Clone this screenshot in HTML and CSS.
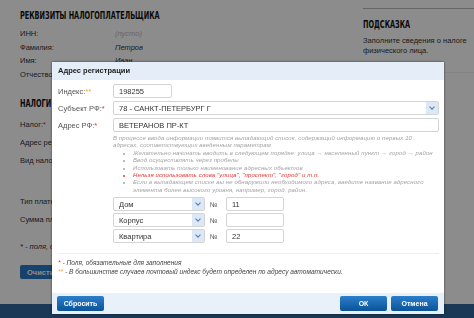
FILE: index.html
```html
<!DOCTYPE html>
<html lang="ru">
<head>
  <meta charset="UTF-8">
  <meta name="viewport" content="width=device-width, initial-scale=1.0">
  <title>Реквизиты налогоплательщика</title>
  <link rel="stylesheet" href="styles.css">
</head>
<body>
  <div class="page">
    <div class="main">
      <h2 class="titulo"><span>РЕКВИЗИТЫ НАЛОГОПЛАТЕЛЬЩИКА</span></h2>
      <div class="datos">
        <span>ИНН:</span><span class="vacio">(пусто)</span>
        <span>Фамилия:</span><span class="valor">Петров</span>
        <span>Имя:</span><span class="valor">Иван</span>
        <span>Отчество:</span><span class="valor">Иванович</span>
      </div>

      <h2 class="titulo titulo-nalogi"><span>НАЛОГИ</span></h2>
      <div class="campos">
        <div class="campo">Налог:<b class="req">*</b></div>
        <div class="campo">Адрес регистрации:</div>
        <div class="campo campo-alto">Вид налога:</div>
        <div class="campo">Тип платежа:</div>
        <div class="campo">Сумма платежа:</div>
      </div>
      <p class="nota">* - поля, обязательные для заполнения</p>
      <button class="btn-limpiar">Очистить</button>
    </div>

    <aside class="side">
      <h3 class="titulo"><span>ПОДСКАЗКА</span></h3>
      <p>Заполните сведения о налоге физического лица.</p>
    </aside>
  </div>
  <footer class="pie"></footer>

  <div class="overlay"></div>

  <div class="modal">
    <div class="modal-head">Адрес регистрации</div>
    <div class="modal-body">
      <div class="fila">
        <label>Индекс:<span class="opc">**</span></label>
        <input class="inp inp-index" type="text" value="198255">
      </div>
      <div class="fila">
        <label>Субъект РФ:<span class="req">*</span></label>
        <div class="sel sel-wide"><span>78 - САНКТ-ПЕТЕРБУРГ Г</span><i class="chev"></i></div>
      </div>
      <div class="fila">
        <label>Адрес РФ:<span class="req">*</span></label>
        <input class="inp inp-wide" type="text" value="ВЕТЕРАНОВ ПР-КТ">
      </div>

      <div class="ayuda">
        <p>В процессе ввода информации появится выпадающий список, содержащий информацию о первых 10<br>адресах, соответствующих введенным параметрам</p>
        <ul>
          <li>Желательно начинать вводить в следующем порядке: улица → населенный пункт → город → район</li>
          <li>Ввод осуществлять через пробелы</li>
          <li>Использовать только наименование адресных объектов</li>
          <li class="warn">Нельзя использовать слова "улица", "проспект", "город" и т.п.</li>
          <li>Если в выпадающем списке вы не обнаружили необходимого адреса, введите название адресного<br>элемента более высокого уровня, например, город, район.</li>
        </ul>
      </div>

      <div class="casa">
        <div class="casa-fila">
          <div class="sel sel-small"><span>Дом</span><i class="chev"></i></div>
          <span class="num">№</span>
          <input class="inp inp-num" type="text" value="11">
        </div>
        <div class="casa-fila">
          <div class="sel sel-small"><span>Корпус</span><i class="chev"></i></div>
          <span class="num">№</span>
          <input class="inp inp-num" type="text" value="">
        </div>
        <div class="casa-fila">
          <div class="sel sel-small"><span>Квартира</span><i class="chev"></i></div>
          <span class="num">№</span>
          <input class="inp inp-num" type="text" value="22">
        </div>
      </div>

      <div class="notas">
        <p><span class="req">*</span> - Поля, обязательные для заполнения</p>
        <p><span class="opc">**</span> - В большинстве случаев почтовый индекс будет определен по адресу автоматически.</p>
      </div>
    </div>
    <div class="modal-foot">
      <button class="btn">Сбросить</button>
      <div class="acciones">
        <button class="btn">ОК</button>
        <button class="btn">Отмена</button>
      </div>
    </div>
  </div>
</body>
</html>
```

FILE: styles.css
```css
body {
  margin: 0;
  font-family: "Liberation Sans", Arial, sans-serif;
  font-size: 7.5px;
  color: #333;
  background-color: #fff;
  overflow: hidden;
}
.page {
  display: flex;
  height: 304px;
  padding-left: 20px;
}
.main {
  width: 330px;
}
.titulo {
  font-family: "DejaVu Sans Condensed", "DejaVu Sans", sans-serif;
  font-stretch: condensed;
  font-weight: bold;
  font-size: 11px;
  line-height: 12px;
  margin: 10px 0 0;
  color: #111;
  white-space: nowrap;
}
.titulo span {
  display: inline-block;
  transform: scaleX(0.66);
  transform-origin: left center;
}
.datos {
  display: grid;
  grid-template-columns: 95px 1fr;
  line-height: 13.5px;
  margin-top: 5px;
}
.vacio {
  color: #bbb;
  font-style: italic;
}
.valor {
  font-style: italic;
}
.titulo-nalogi {
  margin-top: 17px;
}
.campos {
  margin-top: 6px;
}
.campo {
  line-height: 18px;
}
.campo-alto {
  height: 41px;
}
.req {
  color: #e8322e;
  font-weight: normal;
}
.opc {
  color: #f2a33a;
}
.nota {
  font-style: italic;
  margin: 13px 0 0;
  line-height: 9px;
}
.btn-limpiar {
  margin-top: 14px;
  height: 14px;
  width: 62px;
  padding: 0 0 0 7px;
  text-align: left;
  border: none;
  border-radius: 2px;
  background-color: #2a78c4;
  color: #fff;
  font-family: inherit;
  font-size: 7.5px;
  font-weight: bold;
}
.side {
  margin: 8px 0 0 13px;
  flex: 1;
  height: 63px;
  border-top: 1px solid #bbb;
  border-bottom: 1px solid #eee;
}
.side .titulo {
  margin-top: 10px;
}
.side p {
  margin: 5px 4px 0 0;
  line-height: 10px;
}
.pie {
  height: 20px;
  background-color: #33669f;
}
.overlay {
  position: fixed;
  inset: 0;
  background-color: rgba(0, 0, 0, 0.45);
}

/* ventana modal */
.modal {
  position: absolute;
  left: 52px;
  top: 62px;
  width: 392px;
  height: 252px;
  background-color: #fff;
  box-shadow: 0 0 2px rgba(0, 0, 0, 0.6);
  display: flex;
  flex-direction: column;
}
.modal-head {
  height: 18px;
  line-height: 18px;
  padding-left: 6px;
  background-color: #e5eef8;
  font-weight: bold;
  color: #222;
}
.modal-body {
  flex: 1;
  padding: 4px 5px 0 6px;
}
.fila {
  display: flex;
  align-items: center;
  margin-bottom: 3px;
}
.fila label {
  width: 55px;
  color: #555;
}
.inp {
  box-sizing: border-box;
  height: 14px;
  border: 1px solid #d4d4d4;
  border-radius: 2px;
  padding: 0 5px;
  font-family: inherit;
  font-size: 7.5px;
  color: #333;
  outline: none;
}
.inp-index {
  width: 59px;
}
.inp-wide {
  flex: 1;
}
.sel {
  box-sizing: border-box;
  height: 14px;
  display: flex;
  align-items: center;
  border: 1px solid #d4d4d4;
  border-radius: 2px;
  padding-left: 5px;
}
.sel span {
  flex: 1;
}
.sel-wide {
  flex: 1;
}
.chev {
  width: 12px;
  align-self: stretch;
  background-color: #dce8f5;
  position: relative;
}
.chev::after {
  content: "";
  position: absolute;
  left: 4px;
  top: 3px;
  width: 3px;
  height: 3px;
  border-right: 1px solid #4d7db5;
  border-bottom: 1px solid #4d7db5;
  transform: rotate(45deg);
}
.ayuda {
  width: 326px;
  margin-left: 55px;
  color: #a3a3a3;
  font-style: italic;
  font-size: 6px;
  letter-spacing: 0.12px;
  line-height: 7.4px;
}
.ayuda p {
  margin: 0;
}
.ayuda ul {
  margin: 0;
  padding-left: 20px;
}
.ayuda .warn {
  color: #e8322e;
}
.casa {
  margin: 3px 0 0 55px;
}
.casa-fila {
  display: flex;
  align-items: center;
  margin-bottom: 2px;
}
.sel-small {
  width: 92px;
}
.num {
  width: 16px;
  padding-left: 5px;
  color: #555;
  font-size: 7px;
}
.inp-num {
  width: 58px;
}
.notas {
  margin-top: 10px;
  border-top: 1px solid #eee;
  padding-top: 4px;
  font-style: italic;
  font-size: 6.6px;
  line-height: 9px;
  color: #444;
}
.notas p {
  margin: 0;
}
.modal-foot {
  height: 21px;
  display: flex;
  align-items: center;
  justify-content: space-between;
  padding: 0 6px 0 5px;
  background-color: #e8f0f9;
}
.acciones {
  display: flex;
  gap: 4px;
}
.btn {
  width: 47px;
  height: 15px;
  border: none;
  border-radius: 2px;
  background: linear-gradient(#2b80c9, #0a5399);
  color: #fff;
  font-family: inherit;
  font-size: 7px;
  font-weight: bold;
  cursor: pointer;
}
```
